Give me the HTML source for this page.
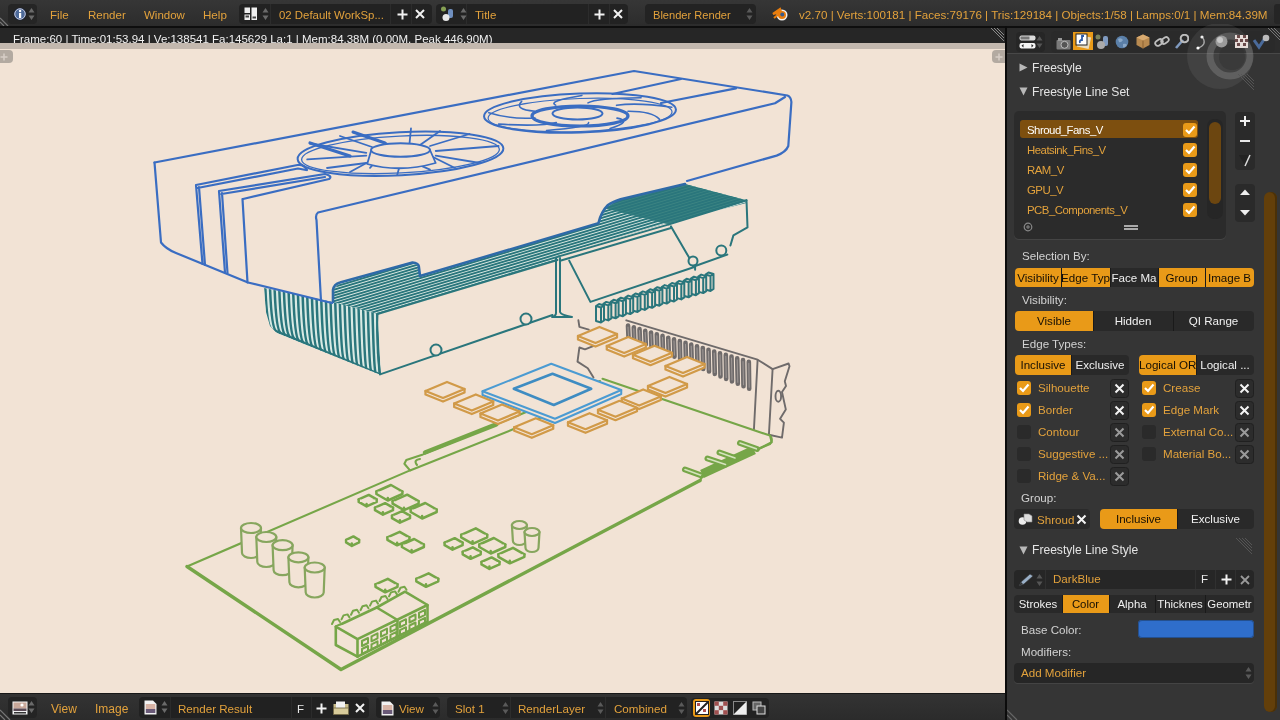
<!DOCTYPE html>
<html><head><meta charset="utf-8">
<style>
*{box-sizing:border-box;margin:0;padding:0}
html,body{width:1280px;height:720px;overflow:hidden;background:#383838;font-family:"Liberation Sans",sans-serif;font-size:11.5px}
.a{position:absolute}
.t{position:absolute;white-space:pre;line-height:14px;will-change:transform}
</style></head><body>
<div class="a" style="left:0px;top:0px;width:1280px;height:26px;background:linear-gradient(#363636,#2c2c2c);"></div>
<div class="a" style="left:0px;top:26px;width:1280px;height:2px;background:#0e0e0e;"></div>
<div class="a" style="left:0px;top:28px;width:1005px;height:15px;background:#262626;"></div>
<div class="a" style="left:0px;top:49px;width:1005px;height:645px;background:#f2e3d5;"></div>
<svg width="1005" height="645" viewBox="0 49 1005 645" style="position:absolute;left:0;top:49px" fill="none" stroke-linecap="round" stroke-linejoin="round">
<defs>
<clipPath id="cf"><polygon points="333,302 333,290 340,282.5 412.5,262.5 418.75,266 420,276 598.4,223.3 604.5,208.2 620.6,199.2 685,184 746.5,200.2 746.5,203 669,222.4 560,254.6 557.5,260 377.5,314"/></clipPath>
<clipPath id="cl"><polygon points="264,288 333,302 333,295 377.5,313.75 381,375 277,333 270,326 266,312"/></clipPath>
</defs>
<polygon points="264,288 333,302 333,295 377.5,313.75 381,375 277,333 270,326 266,312" fill="#d9eae4" stroke="none"/>
<g clip-path="url(#cl)" fill="none">
<path d="M265.4,274.0 L265.4,289.0 Q266.9,326.3 271.7,329.3 L275.7,331.1" stroke="#2a767c" stroke-width="2.5"/>
<path d="M270.1,275.0 L270.1,290.0 Q271.6,328.2 276.2,331.2 L280.2,333.0" stroke="#2a767c" stroke-width="2.5"/>
<path d="M274.7,276.0 L274.7,291.0 Q276.2,330.1 280.7,333.1 L284.7,334.9" stroke="#2a767c" stroke-width="2.5"/>
<path d="M279.4,276.9 L279.4,291.9 Q280.9,331.9 285.2,334.9 L289.2,336.7" stroke="#2a767c" stroke-width="2.5"/>
<path d="M284.0,277.9 L284.0,292.9 Q285.5,333.8 289.8,336.8 L293.8,338.6" stroke="#2a767c" stroke-width="2.5"/>
<path d="M288.7,278.9 L288.7,293.9 Q290.2,335.7 294.3,338.7 L298.3,340.5" stroke="#2a767c" stroke-width="2.5"/>
<path d="M293.3,279.9 L293.3,294.9 Q294.8,337.6 298.8,340.6 L302.8,342.4" stroke="#2a767c" stroke-width="2.5"/>
<path d="M298.0,280.9 L298.0,295.9 Q299.5,339.5 303.3,342.5 L307.3,344.3" stroke="#2a767c" stroke-width="2.5"/>
<path d="M302.7,281.9 L302.7,296.9 Q304.2,341.3 307.8,344.3 L311.8,346.1" stroke="#2a767c" stroke-width="2.5"/>
<path d="M307.3,282.9 L307.3,297.9 Q308.8,343.2 312.3,346.2 L316.3,348.0" stroke="#2a767c" stroke-width="2.5"/>
<path d="M312.0,283.8 L312.0,298.8 Q313.5,345.1 316.8,348.1 L320.8,349.9" stroke="#2a767c" stroke-width="2.5"/>
<path d="M316.6,284.8 L316.6,299.8 Q318.1,347.0 321.3,350.0 L325.3,351.8" stroke="#2a767c" stroke-width="2.5"/>
<path d="M321.3,285.8 L321.3,300.8 Q322.8,348.9 325.9,351.9 L329.9,353.7" stroke="#2a767c" stroke-width="2.5"/>
<path d="M326.0,286.8 L326.0,301.8 Q327.5,350.7 330.4,353.7 L334.4,355.5" stroke="#2a767c" stroke-width="2.5"/>
<path d="M330.6,287.8 L330.6,302.8 Q332.1,352.6 334.9,355.6 L338.9,357.4" stroke="#2a767c" stroke-width="2.5"/>
<path d="M335.3,288.8 L335.3,303.8 Q336.8,354.5 339.4,357.5 L343.4,359.3" stroke="#2a767c" stroke-width="2.5"/>
<path d="M339.9,289.7 L339.9,304.7 Q341.4,356.4 343.9,359.4 L347.9,361.2" stroke="#2a767c" stroke-width="2.5"/>
<path d="M344.6,290.7 L344.6,305.7 Q346.1,358.2 348.4,361.2 L352.4,363.0" stroke="#2a767c" stroke-width="2.5"/>
<path d="M349.2,291.7 L349.2,306.7 Q350.8,360.1 352.9,363.1 L356.9,364.9" stroke="#2a767c" stroke-width="2.5"/>
<path d="M353.9,292.7 L353.9,307.7 Q355.4,362.0 357.4,365.0 L361.4,366.8" stroke="#2a767c" stroke-width="2.5"/>
<path d="M358.6,293.7 L358.6,308.7 Q360.1,363.9 361.9,366.9 L365.9,368.7" stroke="#2a767c" stroke-width="2.5"/>
<path d="M363.2,294.7 L363.2,309.7 Q364.7,365.8 366.5,368.8 L370.5,370.6" stroke="#2a767c" stroke-width="2.5"/>
<path d="M367.9,295.6 L367.9,310.6 Q369.4,367.6 371.0,370.6 L375.0,372.4" stroke="#2a767c" stroke-width="2.5"/>
<path d="M372.5,296.6 L372.5,311.6 Q374.0,369.5 375.5,372.5 L379.5,374.3" stroke="#2a767c" stroke-width="2.5"/>
<path d="M377.2,297.6 L377.2,312.6 Q378.7,371.4 380.0,374.4 L384.0,376.2" stroke="#2a767c" stroke-width="2.5"/>
</g>
<polygon points="333,302 333,290 340,282.5 412.5,262.5 418.75,266 420,276 598.4,223.3 604.5,208.2 620.6,199.2 685,184 746.5,200.2 746.5,203 669,222.4 560,254.6 557.5,260 377.5,314" fill="#e2ede6" stroke="none"/>
<polygon points="604.5,208.2 620.6,199.2 685,184 746.5,200.2 669,224.4 608.5,209.2" fill="#3d8583" stroke="none"/>
<g clip-path="url(#cf)" stroke="#2a767c" stroke-width="1.9">
<line x1="320" y1="331.0" x2="760" y2="199.0"/>
<line x1="320" y1="328.1" x2="760" y2="196.1"/>
<line x1="320" y1="325.3" x2="760" y2="193.3"/>
<line x1="320" y1="322.4" x2="760" y2="190.4"/>
<line x1="320" y1="319.6" x2="760" y2="187.6"/>
<line x1="320" y1="316.8" x2="760" y2="184.8"/>
<line x1="320" y1="313.9" x2="760" y2="181.9"/>
<line x1="320" y1="311.1" x2="760" y2="179.1"/>
<line x1="320" y1="308.2" x2="760" y2="176.2"/>
<line x1="320" y1="305.4" x2="760" y2="173.4"/>
<line x1="320" y1="302.5" x2="760" y2="170.5"/>
<line x1="320" y1="299.6" x2="760" y2="167.6"/>
<line x1="320" y1="296.8" x2="760" y2="164.8"/>
<line x1="320" y1="293.9" x2="760" y2="161.9"/>
<line x1="320" y1="291.1" x2="760" y2="159.1"/>
<line x1="320" y1="288.2" x2="760" y2="156.2"/>
<line x1="320" y1="285.4" x2="760" y2="153.4"/>
<line x1="320" y1="282.6" x2="760" y2="150.6"/>
<line x1="320" y1="279.7" x2="760" y2="147.7"/>
<line x1="320" y1="276.9" x2="760" y2="144.9"/>
<line x1="320" y1="274.0" x2="760" y2="142.0"/>
<line x1="320" y1="271.1" x2="760" y2="139.2"/>
<line x1="320" y1="268.3" x2="760" y2="136.3"/>
<line x1="320" y1="265.4" x2="760" y2="133.4"/>
<line x1="320" y1="262.6" x2="760" y2="130.6"/>
<line x1="320" y1="259.8" x2="760" y2="127.8"/>
<line x1="320" y1="256.9" x2="760" y2="124.9"/>
<line x1="320" y1="254.1" x2="760" y2="122.1"/>
<line x1="320" y1="251.2" x2="760" y2="119.2"/>
<line x1="320" y1="248.3" x2="760" y2="116.3"/>
<line x1="320" y1="245.5" x2="760" y2="113.5"/>
<line x1="320" y1="242.6" x2="760" y2="110.6"/>
<line x1="320" y1="239.8" x2="760" y2="107.8"/>
<line x1="320" y1="236.9" x2="760" y2="104.9"/>
<line x1="320" y1="234.1" x2="760" y2="102.1"/>
<line x1="320" y1="231.2" x2="760" y2="99.2"/>
<line x1="320" y1="228.4" x2="760" y2="96.4"/>
<line x1="320" y1="225.6" x2="760" y2="93.6"/>
<line x1="320" y1="222.7" x2="760" y2="90.7"/>
<line x1="320" y1="219.8" x2="760" y2="87.8"/>
</g>
<path d="M333,302 L333,290 Q334,284 340,282.5 L412.5,262.5 Q418,263 418.75,266 L420,276 L598.4,223.3 Q601,212 608,205 Q612,202 620.6,199.2 L685,184" stroke="#2f6aa8" stroke-width="2.6"/>
<g stroke="#2a767c" stroke-width="2">
<path d="M377.5,313.75 Q376,345 380,374.4 L552.5,315"/>
<path d="M377.5,314 L557.5,260"/>
<g fill="#f2e3d5"><circle cx="436" cy="350" r="5.5"/><circle cx="526" cy="319" r="5.5"/>
<circle cx="693" cy="261" r="4.5"/><circle cx="721.3" cy="250.5" r="5"/></g>
<path d="M556,258 L556,313 Q556,316 552,317 L572,317 Q561,315 560,312 L560,258"/>
<path d="M558,256.6 L669,224.4 M561,260.5 L671,228"/>
<path d="M569.2,260.6 L590.4,301.9 L695.1,266.7"/>
<path d="M671,226.4 L689.1,257.6 M695.1,265.5 L695.1,269.7"/>
<path d="M746.5,200.2 L747.5,227.4 L733.4,235.4 L730.4,245.5 M727.3,254.6 L693.1,266.7"/>
<path d="M669,224.4 L746.5,200.2"/>
</g>
<g stroke="#2a767c" stroke-width="2" fill="#f2e3d5">
<path d="M705.5,274.5 L708.5,272.5 L713.5,274.0 L713.5,289.0 L710.5,291.0 L705.5,289.5 Z M705.5,274.5 L710.5,276.0 L713.5,274.0 M710.5,276.0 L710.5,291.0"/>
<path d="M698.2,276.6 L701.2,274.6 L706.2,276.1 L706.2,291.1 L703.2,293.1 L698.2,291.6 Z M698.2,276.6 L703.2,278.1 L706.2,276.1 M703.2,278.1 L703.2,293.1"/>
<path d="M690.9,278.7 L693.9,276.7 L698.9,278.2 L698.9,293.2 L695.9,295.2 L690.9,293.7 Z M690.9,278.7 L695.9,280.2 L698.9,278.2 M695.9,280.2 L695.9,295.2"/>
<path d="M683.6,280.8 L686.6,278.8 L691.6,280.3 L691.6,295.3 L688.6,297.3 L683.6,295.8 Z M683.6,280.8 L688.6,282.3 L691.6,280.3 M688.6,282.3 L688.6,297.3"/>
<path d="M676.3,282.9 L679.3,280.9 L684.3,282.4 L684.3,297.4 L681.3,299.4 L676.3,297.9 Z M676.3,282.9 L681.3,284.4 L684.3,282.4 M681.3,284.4 L681.3,299.4"/>
<path d="M669.0,285.0 L672.0,283.0 L677.0,284.5 L677.0,299.5 L674.0,301.5 L669.0,300.0 Z M669.0,285.0 L674.0,286.5 L677.0,284.5 M674.0,286.5 L674.0,301.5"/>
<path d="M661.7,287.1 L664.7,285.1 L669.7,286.6 L669.7,301.6 L666.7,303.6 L661.7,302.1 Z M661.7,287.1 L666.7,288.6 L669.7,286.6 M666.7,288.6 L666.7,303.6"/>
<path d="M654.4,289.2 L657.4,287.2 L662.4,288.7 L662.4,303.7 L659.4,305.7 L654.4,304.2 Z M654.4,289.2 L659.4,290.7 L662.4,288.7 M659.4,290.7 L659.4,305.7"/>
<path d="M647.1,291.3 L650.1,289.3 L655.1,290.8 L655.1,305.8 L652.1,307.8 L647.1,306.3 Z M647.1,291.3 L652.1,292.8 L655.1,290.8 M652.1,292.8 L652.1,307.8"/>
<path d="M639.8,293.4 L642.8,291.4 L647.8,292.9 L647.8,307.9 L644.8,309.9 L639.8,308.4 Z M639.8,293.4 L644.8,294.9 L647.8,292.9 M644.8,294.9 L644.8,309.9"/>
<path d="M632.5,295.5 L635.5,293.5 L640.5,295.0 L640.5,310.0 L637.5,312.0 L632.5,310.5 Z M632.5,295.5 L637.5,297.0 L640.5,295.0 M637.5,297.0 L637.5,312.0"/>
<path d="M625.2,297.6 L628.2,295.6 L633.2,297.1 L633.2,312.1 L630.2,314.1 L625.2,312.6 Z M625.2,297.6 L630.2,299.1 L633.2,297.1 M630.2,299.1 L630.2,314.1"/>
<path d="M617.9,299.7 L620.9,297.7 L625.9,299.2 L625.9,314.2 L622.9,316.2 L617.9,314.7 Z M617.9,299.7 L622.9,301.2 L625.9,299.2 M622.9,301.2 L622.9,316.2"/>
<path d="M610.6,301.8 L613.6,299.8 L618.6,301.3 L618.6,316.3 L615.6,318.3 L610.6,316.8 Z M610.6,301.8 L615.6,303.3 L618.6,301.3 M615.6,303.3 L615.6,318.3"/>
<path d="M603.3,303.9 L606.3,301.9 L611.3,303.4 L611.3,318.4 L608.3,320.4 L603.3,318.9 Z M603.3,303.9 L608.3,305.4 L611.3,303.4 M608.3,305.4 L608.3,320.4"/>
<path d="M596.0,306.0 L599.0,304.0 L604.0,305.5 L604.0,320.5 L601.0,322.5 L596.0,321.0 Z M596.0,306.0 L601.0,307.5 L604.0,305.5 M601.0,307.5 L601.0,322.5"/>
</g>
<g stroke="#3a6dc2" stroke-width="2.2">
<path d="M154.5,162.5 L634,71 L787.5,95.5 Q791,97 791.4,102 L788.3,146 Q786,152 776.6,155.6 L687,181"/>
<path d="M154.5,162.5 L161,242.5 Q166,249 176,253 L248,282.5 L332,303"/>
<path d="M785,97 L775,103.3 L318,212.5 Q315,215 316.5,220 L321,301"/>
<path d="M196,185 L297.5,165 Q304,164 307,170 M197.5,188 L298,168.5 L306,170 M196,185 L202.5,264 M199,187 L205,265"/>
<path d="M219,191 L325,174 Q333,176 329,179 L243,199 M221.5,194 L325,177 M219,191 L225,272.5 M222,193 L227.5,273"/>
<path d="M242.5,199 L247.5,282.5"/>
<path d="M612.5,94 L681,79 M661,103 L736,88.4"/>
</g>
<g stroke="#3a6dc2" stroke-width="2">
<ellipse cx="400.5" cy="153.7" rx="103" ry="21.5" transform="rotate(-3 400.5 153.7)"/>
<ellipse cx="400.5" cy="154.5" rx="99" ry="18.5" transform="rotate(-3 400.5 154.5)" stroke-width="1.3"/>
<line x1="310" y1="143.5" x2="366.3" y2="152.8" stroke-width="1.8"/>
<line x1="353" y1="132.2" x2="387" y2="143.5" stroke-width="1.8"/>
<line x1="411" y1="128.4" x2="409.5" y2="143.5" stroke-width="1.8"/>
<line x1="469.5" y1="134" x2="430" y2="146" stroke-width="1.8"/>
<line x1="498.6" y1="146" x2="435.7" y2="151" stroke-width="1.8"/>
<line x1="479.8" y1="163" x2="435.7" y2="155.6" stroke-width="1.8"/>
<line x1="430" y1="169.7" x2="402" y2="157.5" stroke-width="1.8"/>
<line x1="397.3" y1="174.4" x2="402" y2="157.5" stroke-width="1.8"/>
<line x1="370" y1="167.8" x2="379.4" y2="157.5" stroke-width="1.8"/>
<line x1="307.2" y1="159.4" x2="366.3" y2="155.6" stroke-width="1.8"/>
<line x1="327" y1="168" x2="366.3" y2="163" stroke-width="1.8"/>
<line x1="440" y1="131" x2="420" y2="145" stroke-width="1.8"/>
<line x1="340" y1="136" x2="372" y2="147" stroke-width="1.8"/>
<line x1="455" y1="168" x2="433" y2="157" stroke-width="1.8"/>
<line x1="350" y1="172" x2="372" y2="160" stroke-width="1.8"/>
<path d="M310,143 L350,156" stroke-width="3.2"/><path d="M353,132 L385,143" stroke-width="3"/>
</g>
<path d="M371,151 L367.2,164 Q400,173 435.7,163 L430,150" stroke="#3a6dc2" stroke-width="1.8" fill="#f2e3d5"/>
<ellipse cx="400.5" cy="150" rx="29.5" ry="6.8" stroke="#3a6dc2" stroke-width="2" fill="#f2e3d5"/>
<g transform="translate(580,113) rotate(-2)" stroke="#3a6dc2" stroke-width="2">
<ellipse cx="0" cy="0" rx="96" ry="19.5"/>
<ellipse cx="0" cy="2.0" rx="92" ry="16.5" stroke-width="1.2"/>
<path d="M48.0,0.0 Q71.9,0.7 79.3,9.1" stroke-width="1.6"/>
<path d="M36.8,6.4 Q52.8,9.9 29.5,16.6" stroke-width="1.6"/>
<path d="M8.3,9.8 Q8.9,14.5 -34.1,16.3" stroke-width="1.6"/>
<path d="M-24.0,8.7 Q-39.1,12.3 -81.7,8.3" stroke-width="1.6"/>
<path d="M-45.1,3.4 Q-68.8,4.3 -91.1,-3.5" stroke-width="1.6"/>
<path d="M-45.1,-3.4 Q-66.3,-5.7 -57.9,-13.7" stroke-width="1.6"/>
<path d="M-24.0,-8.7 Q-32.8,-13.0 2.5,-17.5" stroke-width="1.6"/>
<path d="M8.3,-9.8 Q16.0,-14.3 61.6,-13.1" stroke-width="1.6"/>
<path d="M36.8,-6.4 Q57.4,-8.8 92.0,-2.6" stroke-width="1.6"/>
</g>
<ellipse cx="580" cy="116" rx="48" ry="10" stroke="#3a6dc2" stroke-width="3.2"/>
<ellipse cx="577.5" cy="113.5" rx="25" ry="6" stroke="#3a6dc2" stroke-width="2" fill="#f2e3d5"/>
<g stroke="#6f6b6b" stroke-width="1.9">
<path d="M626.3,320.3 L757.6,359.7 L772.6,369.1 L788.6,363.5 L789.5,366.3 L784.8,381.3 L786,386 L782,392 L785.8,409.4 L780.1,418.8 L783.9,422.6 L782,437.6 L768.9,434.8"/>
<path d="M757.6,360 L753.9,430 M772.6,369 L768.9,434.8"/>
<ellipse cx="778.3" cy="396.3" rx="2.8" ry="5.5"/>
<path d="M578.4,320.3 L579.4,326.9 L588.8,329.7 M594.4,345.6 L585,349.4 L579.4,347.5 L577.5,361.6 L587.8,368.2 L593.5,377.5"/>
</g>
<g stroke="#6f6b6b" stroke-width="4.6">
<line x1="628.0" y1="325.6" x2="628.5" y2="336.9"/>
<line x1="633.8" y1="327.3" x2="634.2" y2="339.3"/>
<line x1="639.5" y1="329.1" x2="640.0" y2="341.8"/>
<line x1="645.2" y1="330.8" x2="645.8" y2="344.3"/>
<line x1="651.0" y1="332.5" x2="651.5" y2="346.8"/>
<line x1="656.8" y1="334.2" x2="657.2" y2="349.2"/>
<line x1="662.5" y1="335.9" x2="663.0" y2="351.7"/>
<line x1="668.2" y1="337.7" x2="668.8" y2="354.2"/>
<line x1="674.0" y1="339.4" x2="674.5" y2="356.6"/>
<line x1="679.8" y1="341.1" x2="680.2" y2="359.1"/>
<line x1="685.5" y1="342.9" x2="686.0" y2="361.6"/>
<line x1="691.2" y1="344.6" x2="691.8" y2="364.1"/>
<line x1="697.0" y1="346.3" x2="697.5" y2="366.5"/>
<line x1="702.8" y1="348.0" x2="703.2" y2="369.0"/>
<line x1="708.5" y1="349.8" x2="709.0" y2="371.5"/>
<line x1="714.2" y1="351.5" x2="714.8" y2="373.9"/>
<line x1="720.0" y1="353.2" x2="720.5" y2="376.4"/>
<line x1="725.8" y1="354.9" x2="726.2" y2="378.9"/>
<line x1="731.5" y1="356.6" x2="732.0" y2="381.4"/>
<line x1="737.2" y1="358.4" x2="737.8" y2="383.8"/>
<line x1="743.0" y1="360.1" x2="743.5" y2="386.3"/>
<line x1="748.8" y1="361.8" x2="749.2" y2="388.8"/>
</g>
<g stroke="#9d9694" stroke-width="1.1">
<line x1="628.0" y1="327.1" x2="628.5" y2="335.4"/>
<line x1="633.8" y1="328.8" x2="634.2" y2="337.8"/>
<line x1="639.5" y1="330.6" x2="640.0" y2="340.3"/>
<line x1="645.2" y1="332.3" x2="645.8" y2="342.8"/>
<line x1="651.0" y1="334.0" x2="651.5" y2="345.2"/>
<line x1="656.8" y1="335.7" x2="657.2" y2="347.7"/>
<line x1="662.5" y1="337.4" x2="663.0" y2="350.2"/>
<line x1="668.2" y1="339.2" x2="668.8" y2="352.7"/>
<line x1="674.0" y1="340.9" x2="674.5" y2="355.1"/>
<line x1="679.8" y1="342.6" x2="680.2" y2="357.6"/>
<line x1="685.5" y1="344.4" x2="686.0" y2="360.1"/>
<line x1="691.2" y1="346.1" x2="691.8" y2="362.6"/>
<line x1="697.0" y1="347.8" x2="697.5" y2="365.0"/>
<line x1="702.8" y1="349.5" x2="703.2" y2="367.5"/>
<line x1="708.5" y1="351.2" x2="709.0" y2="370.0"/>
<line x1="714.2" y1="353.0" x2="714.8" y2="372.4"/>
<line x1="720.0" y1="354.7" x2="720.5" y2="374.9"/>
<line x1="725.8" y1="356.4" x2="726.2" y2="377.4"/>
<line x1="731.5" y1="358.1" x2="732.0" y2="379.9"/>
<line x1="737.2" y1="359.9" x2="737.8" y2="382.3"/>
<line x1="743.0" y1="361.6" x2="743.5" y2="384.8"/>
<line x1="748.8" y1="363.3" x2="749.2" y2="387.3"/>
</g>
<g stroke="#76a648" stroke-width="2.1">
<path d="M187,566.5 L410,470.4 L404.4,463.8 L406.3,460 L423,454.4 L528,411.3 L600,381"/>
<path d="M410,470.4 L511.3,430 L580,401"/>
<path d="M417,465 Q413,460 420,459"/>
<path d="M602.5,378.75 L770,435.6 L771.7,442.2 L760,448.3"/>
<path d="M187,566.5 L341,669.5 L700,480.5" stroke-width="3.4"/>
</g>
<path d="M425,452.5 L496.3,424.4" stroke="#76a648" stroke-width="4.5"/>
<path d="M754,450 L702,474" stroke="#76a648" stroke-width="9" stroke-linecap="butt"/>
<line x1="740" y1="443" x2="757" y2="449" stroke="#76a648" stroke-width="6"/>
<line x1="740" y1="443" x2="757" y2="449" stroke="#d5e3bd" stroke-width="1.6"/>
<line x1="719.5" y1="452.5" x2="735" y2="458" stroke="#76a648" stroke-width="6"/>
<line x1="719.5" y1="452.5" x2="735" y2="458" stroke="#d5e3bd" stroke-width="1.6"/>
<line x1="707.5" y1="458.5" x2="725.5" y2="464.5" stroke="#76a648" stroke-width="6"/>
<line x1="707.5" y1="458.5" x2="725.5" y2="464.5" stroke="#d5e3bd" stroke-width="1.6"/>
<line x1="685" y1="469.5" x2="701.5" y2="475.5" stroke="#76a648" stroke-width="6"/>
<line x1="685" y1="469.5" x2="701.5" y2="475.5" stroke="#d5e3bd" stroke-width="1.6"/>
<path d="M771,436.9 Q773,441 770,444 L758,449 M702,476 L700,481" stroke="#76a648" stroke-width="2.2"/>
<path d="M241,528 L242,553 A9,5 0 0 0 260,553 L261,528" stroke="#87a65e" stroke-width="2.2" fill="#f2e3d5"/>
<ellipse cx="251" cy="528" rx="10" ry="5" stroke="#87a65e" stroke-width="2.2" fill="#f2e3d5"/>
<path d="M256.3,537 L257.3,562 A9,5 0 0 0 275.3,562 L276.3,537" stroke="#87a65e" stroke-width="2.2" fill="#f2e3d5"/>
<ellipse cx="266.3" cy="537" rx="10" ry="5" stroke="#87a65e" stroke-width="2.2" fill="#f2e3d5"/>
<path d="M272.6,545.2 L273.6,570.2 A9,5 0 0 0 291.6,570.2 L292.6,545.2" stroke="#87a65e" stroke-width="2.2" fill="#f2e3d5"/>
<ellipse cx="282.6" cy="545.2" rx="10" ry="5" stroke="#87a65e" stroke-width="2.2" fill="#f2e3d5"/>
<path d="M288.4,557.3 L289.4,582.3 A9,5 0 0 0 307.4,582.3 L308.4,557.3" stroke="#87a65e" stroke-width="2.2" fill="#f2e3d5"/>
<ellipse cx="298.4" cy="557.3" rx="10" ry="5" stroke="#87a65e" stroke-width="2.2" fill="#f2e3d5"/>
<path d="M304.7,567.5 L305.7,592.5 A9,5 0 0 0 323.7,592.5 L324.7,567.5" stroke="#87a65e" stroke-width="2.2" fill="#f2e3d5"/>
<ellipse cx="314.7" cy="567.5" rx="10" ry="5" stroke="#87a65e" stroke-width="2.2" fill="#f2e3d5"/>
<path d="M511.9,525 L512.9,541 A6.5,4 0 0 0 525.9,541 L526.9,525" stroke="#87a65e" stroke-width="2.2" fill="#f2e3d5"/>
<ellipse cx="519.4" cy="525" rx="7.5" ry="4" stroke="#87a65e" stroke-width="2.2" fill="#f2e3d5"/>
<path d="M524.5,532 L525.5,548 A6.5,4 0 0 0 538.5,548 L539.5,532" stroke="#87a65e" stroke-width="2.2" fill="#f2e3d5"/>
<ellipse cx="532" cy="532" rx="7.5" ry="4" stroke="#87a65e" stroke-width="2.2" fill="#f2e3d5"/>
<polygon points="358.7,499.4 368.8,494.9 376.7,499.4 366.6,503.9" stroke="#76a648" stroke-width="2.5" fill="#f2e3d5"/>
<path d="M358.7,499.4 L358.7,501.9 L366.6,506.4 L376.7,501.9 L376.7,499.4 M366.6,503.9 L366.6,506.4" stroke="#76a648" stroke-width="2.5" fill="#f2e3d5"/>
<polygon points="376.4,491.5 391.0,485.0 402.4,491.5 387.8,498.0" stroke="#76a648" stroke-width="2.5" fill="#f2e3d5"/>
<path d="M376.4,491.5 L376.4,494.0 L387.8,500.5 L402.4,494.0 L402.4,491.5 M387.8,498.0 L387.8,500.5" stroke="#76a648" stroke-width="2.5" fill="#f2e3d5"/>
<polygon points="375.0,507.7 385.1,503.2 393.0,507.7 382.9,512.2" stroke="#76a648" stroke-width="2.5" fill="#f2e3d5"/>
<path d="M375.0,507.7 L375.0,510.2 L382.9,514.7 L393.0,510.2 L393.0,507.7 M382.9,512.2 L382.9,514.7" stroke="#76a648" stroke-width="2.5" fill="#f2e3d5"/>
<polygon points="392.6,501.2 407.2,494.7 418.6,501.2 404.0,507.7" stroke="#76a648" stroke-width="2.5" fill="#f2e3d5"/>
<path d="M392.6,501.2 L392.6,503.7 L404.0,510.2 L418.6,503.7 L418.6,501.2 M404.0,507.7 L404.0,510.2" stroke="#76a648" stroke-width="2.5" fill="#f2e3d5"/>
<polygon points="392.0,515.7 402.1,511.2 410.0,515.7 399.9,520.2" stroke="#76a648" stroke-width="2.5" fill="#f2e3d5"/>
<path d="M392.0,515.7 L392.0,518.2 L399.9,522.7 L410.0,518.2 L410.0,515.7 M399.9,520.2 L399.9,522.7" stroke="#76a648" stroke-width="2.5" fill="#f2e3d5"/>
<polygon points="410.7,509.5 425.3,503.0 436.7,509.5 422.1,516.0" stroke="#76a648" stroke-width="2.5" fill="#f2e3d5"/>
<path d="M410.7,509.5 L410.7,512.0 L422.1,518.5 L436.7,512.0 L436.7,509.5 M422.1,516.0 L422.1,518.5" stroke="#76a648" stroke-width="2.5" fill="#f2e3d5"/>
<polygon points="346.1,539.9 353.4,536.4 359.1,539.9 351.8,543.4" stroke="#76a648" stroke-width="2.5" fill="#f2e3d5"/>
<path d="M346.1,539.9 L346.1,542.4 L351.8,545.9 L359.1,542.4 L359.1,539.9 M351.8,543.4 L351.8,545.9" stroke="#76a648" stroke-width="2.5" fill="#f2e3d5"/>
<polygon points="387.4,537.3 399.7,531.8 409.4,537.3 397.1,542.8" stroke="#76a648" stroke-width="2.5" fill="#f2e3d5"/>
<path d="M387.4,537.3 L387.4,539.8 L397.1,545.3 L409.4,539.8 L409.4,537.3 M397.1,542.8 L397.1,545.3" stroke="#76a648" stroke-width="2.5" fill="#f2e3d5"/>
<polygon points="401.9,544.5 414.2,539.0 423.9,544.5 411.6,550.0" stroke="#76a648" stroke-width="2.5" fill="#f2e3d5"/>
<path d="M401.9,544.5 L401.9,547.0 L411.6,552.5 L423.9,547.0 L423.9,544.5 M411.6,550.0 L411.6,552.5" stroke="#76a648" stroke-width="2.5" fill="#f2e3d5"/>
<polygon points="444.6,542.7 454.7,538.2 462.6,542.7 452.5,547.2" stroke="#76a648" stroke-width="2.5" fill="#f2e3d5"/>
<path d="M444.6,542.7 L444.6,545.2 L452.5,549.7 L462.6,545.2 L462.6,542.7 M452.5,547.2 L452.5,549.7" stroke="#76a648" stroke-width="2.5" fill="#f2e3d5"/>
<polygon points="461.2,534.8 475.8,528.3 487.2,534.8 472.6,541.3" stroke="#76a648" stroke-width="2.5" fill="#f2e3d5"/>
<path d="M461.2,534.8 L461.2,537.3 L472.6,543.8 L487.2,537.3 L487.2,534.8 M472.6,541.3 L472.6,543.8" stroke="#76a648" stroke-width="2.5" fill="#f2e3d5"/>
<polygon points="462.7,551.8 472.8,547.3 480.7,551.8 470.6,556.3" stroke="#76a648" stroke-width="2.5" fill="#f2e3d5"/>
<path d="M462.7,551.8 L462.7,554.3 L470.6,558.8 L480.7,554.3 L480.7,551.8 M470.6,556.3 L470.6,558.8" stroke="#76a648" stroke-width="2.5" fill="#f2e3d5"/>
<polygon points="479.3,544.5 493.9,538.0 505.3,544.5 490.7,551.0" stroke="#76a648" stroke-width="2.5" fill="#f2e3d5"/>
<path d="M479.3,544.5 L479.3,547.0 L490.7,553.5 L505.3,547.0 L505.3,544.5 M490.7,551.0 L490.7,553.5" stroke="#76a648" stroke-width="2.5" fill="#f2e3d5"/>
<polygon points="481.5,561.9 491.6,557.4 499.5,561.9 489.4,566.4" stroke="#76a648" stroke-width="2.5" fill="#f2e3d5"/>
<path d="M481.5,561.9 L481.5,564.4 L489.4,568.9 L499.5,564.4 L499.5,561.9 M489.4,566.4 L489.4,568.9" stroke="#76a648" stroke-width="2.5" fill="#f2e3d5"/>
<polygon points="498.4,554.3 513.0,547.8 524.4,554.3 509.8,560.8" stroke="#76a648" stroke-width="2.5" fill="#f2e3d5"/>
<path d="M498.4,554.3 L498.4,556.8 L509.8,563.3 L524.4,556.8 L524.4,554.3 M509.8,560.8 L509.8,563.3" stroke="#76a648" stroke-width="2.5" fill="#f2e3d5"/>
<polygon points="375.5,584.3 387.8,578.8 397.5,584.3 385.2,589.8" stroke="#76a648" stroke-width="2.5" fill="#f2e3d5"/>
<path d="M375.5,584.3 L375.5,586.8 L385.2,592.3 L397.5,586.8 L397.5,584.3 M385.2,589.8 L385.2,592.3" stroke="#76a648" stroke-width="2.5" fill="#f2e3d5"/>
<polygon points="416.3,578.8 428.6,573.3 438.3,578.8 426.0,584.3" stroke="#76a648" stroke-width="2.5" fill="#f2e3d5"/>
<path d="M416.3,578.8 L416.3,581.3 L426.0,586.8 L438.3,581.3 L438.3,578.8 M426.0,584.3 L426.0,586.8" stroke="#76a648" stroke-width="2.5" fill="#f2e3d5"/>
<g stroke="#76a648" stroke-width="2.6" fill="#f2e3d5">
<path d="M335.8,626.7 L376.7,607.5 L405,591.7 L427.5,605 L427.5,621.7 L357.5,656.7 L335.8,645 Z"/>
<path d="M335.8,626.7 L357.5,639.2 L427.5,605 M357.5,639.2 L357.5,656.7 M376.7,607.5 L397.5,620 L397.5,638"/>
</g>
<g stroke="#76a648" stroke-width="2">
<path d="M362.0,641.0 l6,-3 l0,5 l-6,3 z"/>
<path d="M371.5,636.3 l6,-3 l0,5 l-6,3 z"/>
<path d="M381.0,631.6 l6,-3 l0,5 l-6,3 z"/>
<path d="M390.5,626.9 l6,-3 l0,5 l-6,3 z"/>
<path d="M400.0,622.2 l6,-3 l0,5 l-6,3 z"/>
<path d="M409.5,617.5 l6,-3 l0,5 l-6,3 z"/>
<path d="M419.0,612.8 l6,-3 l0,5 l-6,3 z"/>
<path d="M362.0,649.0 l6,-3 l0,5 l-6,3 z"/>
<path d="M371.5,644.3 l6,-3 l0,5 l-6,3 z"/>
<path d="M381.0,639.6 l6,-3 l0,5 l-6,3 z"/>
<path d="M390.5,634.9 l6,-3 l0,5 l-6,3 z"/>
<path d="M400.0,630.2 l6,-3 l0,5 l-6,3 z"/>
<path d="M409.5,625.5 l6,-3 l0,5 l-6,3 z"/>
<path d="M419.0,620.8 l6,-3 l0,5 l-6,3 z"/>
<path d="M332.0,624.0 l2,-4 l4,-1 l2,3"/>
<path d="M341.5,619.4 l2,-4 l4,-1 l2,3"/>
<path d="M351.0,614.8 l2,-4 l4,-1 l2,3"/>
<path d="M360.5,610.2 l2,-4 l4,-1 l2,3"/>
<path d="M370.0,605.6 l2,-4 l4,-1 l2,3"/>
<path d="M379.5,601.0 l2,-4 l4,-1 l2,3"/>
<path d="M389.0,596.4 l2,-4 l4,-1 l2,3"/>
<path d="M398.5,591.8 l2,-4 l4,-1 l2,3"/>
</g>
<g stroke="#4b9bd2" stroke-width="2" fill="#f2e3d5">
<path d="M482.5,391.25 L482.5,395 L555,423 L621.25,394 L621.25,390" />
<polygon points="482.5,391.25 551.25,363.75 621.25,390 555,418.75"/>
</g>
<polygon points="513.75,388.75 552.5,373.75 591.25,388.75 553.75,405" stroke="#3e8cc2" stroke-width="2.5" fill="none"/>
<path d="M578.0,336.0 L578.0,339.5 L595.5,346.5 L617.0,337.5 L617.0,334.0" stroke="#d19a48" stroke-width="2.3" fill="#f2e3d5"/>
<polygon points="578.0,336.0 599.5,327.0 617.0,334.0 595.5,343.0" stroke="#d19a48" stroke-width="2.3" fill="#f2e3d5"/>
<path d="M606.8,346.0 L606.8,349.5 L624.2,356.5 L645.8,347.5 L645.8,344.0" stroke="#d19a48" stroke-width="2.3" fill="#f2e3d5"/>
<polygon points="606.8,346.0 628.2,337.0 645.8,344.0 624.2,353.0" stroke="#d19a48" stroke-width="2.3" fill="#f2e3d5"/>
<path d="M633.0,354.8 L633.0,358.2 L650.5,365.2 L672.0,356.2 L672.0,352.8" stroke="#d19a48" stroke-width="2.3" fill="#f2e3d5"/>
<polygon points="633.0,354.8 654.5,345.8 672.0,352.8 650.5,361.8" stroke="#d19a48" stroke-width="2.3" fill="#f2e3d5"/>
<path d="M665.5,366.0 L665.5,369.5 L683.0,376.5 L704.5,367.5 L704.5,364.0" stroke="#d19a48" stroke-width="2.3" fill="#f2e3d5"/>
<polygon points="665.5,366.0 687.0,357.0 704.5,364.0 683.0,373.0" stroke="#d19a48" stroke-width="2.3" fill="#f2e3d5"/>
<path d="M648.0,386.0 L648.0,389.5 L665.5,396.5 L687.0,387.5 L687.0,384.0" stroke="#d19a48" stroke-width="2.3" fill="#f2e3d5"/>
<polygon points="648.0,386.0 669.5,377.0 687.0,384.0 665.5,393.0" stroke="#d19a48" stroke-width="2.3" fill="#f2e3d5"/>
<path d="M621.8,398.5 L621.8,402.0 L639.2,409.0 L660.8,400.0 L660.8,396.5" stroke="#d19a48" stroke-width="2.3" fill="#f2e3d5"/>
<polygon points="621.8,398.5 643.2,389.5 660.8,396.5 639.2,405.5" stroke="#d19a48" stroke-width="2.3" fill="#f2e3d5"/>
<path d="M598.0,409.8 L598.0,413.2 L615.5,420.2 L637.0,411.2 L637.0,407.8" stroke="#d19a48" stroke-width="2.3" fill="#f2e3d5"/>
<polygon points="598.0,409.8 619.5,400.8 637.0,407.8 615.5,416.8" stroke="#d19a48" stroke-width="2.3" fill="#f2e3d5"/>
<path d="M568.0,422.2 L568.0,425.8 L585.5,432.8 L607.0,423.8 L607.0,420.2" stroke="#d19a48" stroke-width="2.3" fill="#f2e3d5"/>
<polygon points="568.0,422.2 589.5,413.2 607.0,420.2 585.5,429.2" stroke="#d19a48" stroke-width="2.3" fill="#f2e3d5"/>
<path d="M425.5,391.0 L425.5,394.5 L443.0,401.5 L464.5,392.5 L464.5,389.0" stroke="#d19a48" stroke-width="2.3" fill="#f2e3d5"/>
<polygon points="425.5,391.0 447.0,382.0 464.5,389.0 443.0,398.0" stroke="#d19a48" stroke-width="2.3" fill="#f2e3d5"/>
<path d="M454.2,403.5 L454.2,407.0 L471.8,414.0 L493.2,405.0 L493.2,401.5" stroke="#d19a48" stroke-width="2.3" fill="#f2e3d5"/>
<polygon points="454.2,403.5 475.8,394.5 493.2,401.5 471.8,410.5" stroke="#d19a48" stroke-width="2.3" fill="#f2e3d5"/>
<path d="M480.5,413.5 L480.5,417.0 L498.0,424.0 L519.5,415.0 L519.5,411.5" stroke="#d19a48" stroke-width="2.3" fill="#f2e3d5"/>
<polygon points="480.5,413.5 502.0,404.5 519.5,411.5 498.0,420.5" stroke="#d19a48" stroke-width="2.3" fill="#f2e3d5"/>
<path d="M514.2,427.2 L514.2,430.8 L531.8,437.8 L553.2,428.8 L553.2,425.2" stroke="#d19a48" stroke-width="2.3" fill="#f2e3d5"/>
<polygon points="514.2,427.2 535.8,418.2 553.2,425.2 531.8,434.2" stroke="#d19a48" stroke-width="2.3" fill="#f2e3d5"/>
</svg>
<div class="a" style="left:0px;top:43px;width:1005px;height:6px;background:#c3b8ae;"></div>
<div class="a" style="left:0px;top:693px;width:1005px;height:1px;background:#181818;"></div>
<div class="a" style="left:0px;top:694px;width:1005px;height:26px;background:linear-gradient(#333333,#2b2b2b);"></div>
<div class="a" style="left:1005px;top:26px;width:2px;height:694px;background:#0c0c0c;"></div>
<div class="a" style="left:1007px;top:28px;width:273px;height:25px;background:#2c2c2c;"></div>
<div class="a" style="left:1007px;top:53px;width:273px;height:1px;background:#484848;"></div>
<div class="a" style="left:1007px;top:54px;width:273px;height:666px;background:#353535;"></div>
<svg class="a" style="left:0px;top:14px" width="12" height="12" viewBox="0 0 12 12"><line x1="0" y1="4" x2="8" y2="12" stroke="#777" stroke-width="1.2"/><line x1="0" y1="8" x2="4" y2="12" stroke="#777" stroke-width="1.2"/></svg>
<div class="a" style="left:8px;top:4px;width:29px;height:20px;background:#252525;border-radius:4px;"></div>
<svg class="a" style="left:13px;top:7px" width="14" height="14" viewBox="0 0 14 14"><circle cx="7" cy="7" r="6.3" fill="#0f1f3a"/><circle cx="7" cy="7" r="5.3" fill="#4d6a9a" stroke="#dde" stroke-width="0.9"/><rect x="6" y="6" width="2.2" height="5" fill="#fff"/><circle cx="7.1" cy="4" r="1.2" fill="#fff"/></svg>
<svg class="a" style="left:28px;top:7px" width="7" height="14" viewBox="0 0 7 14"><path d="M3.5,1 L6.5,5.5 L0.5,5.5Z M0.5,8.5 L6.5,8.5 L3.5,13Z" fill="#6a6a6a"/></svg>
<div class="t" style="left:50px;top:7.98px;font-size:11.6px;color:#e3a23c;">File</div>
<div class="t" style="left:88px;top:8.02px;font-size:11.5px;color:#e3a23c;">Render</div>
<div class="t" style="left:144px;top:8.02px;font-size:11.5px;color:#e3a23c;">Window</div>
<div class="t" style="left:203px;top:7.98px;font-size:11.6px;color:#e3a23c;">Help</div>
<div class="a" style="left:239px;top:4px;width:193px;height:20px;background:#222;border-radius:4px;"></div>
<div class="a" style="left:270px;top:4px;width:1px;height:20px;background:#2c2c2c;"></div>
<div class="a" style="left:390px;top:4px;width:1px;height:20px;background:#2c2c2c;"></div>
<div class="a" style="left:411px;top:4px;width:1px;height:20px;background:#2c2c2c;"></div>
<svg class="a" style="left:244px;top:7px" width="14" height="14" viewBox="0 0 14 14"><rect x="0.5" y="0.5" width="5.5" height="5.5" fill="#f0f0f0"/><rect x="0.5" y="7.5" width="5.5" height="5.5" fill="#f0f0f0"/><rect x="7.5" y="0.5" width="5.5" height="12.5" fill="#f0f0f0"/><rect x="1.5" y="8.5" width="3.5" height="2" fill="#444"/><rect x="8.5" y="9.5" width="3.5" height="2" fill="#444"/></svg>
<svg class="a" style="left:262px;top:7px" width="7" height="14" viewBox="0 0 7 14"><path d="M3.5,1 L6.5,5.5 L0.5,5.5Z M0.5,8.5 L6.5,8.5 L3.5,13Z" fill="#6a6a6a"/></svg>
<div class="t" style="left:278.5px;top:8.05px;font-size:11.4px;color:#e3a23c;">02 Default WorkSp...</div>
<svg class="a" style="left:397px;top:9px" width="11" height="11" viewBox="0 0 11 11"><path d="M5.5,0.5V10.5M0.5,5.5H10.5" stroke="#f2f2f2" stroke-width="2"/></svg>
<svg class="a" style="left:415px;top:9px" width="10" height="10" viewBox="0 0 10 10"><path d="M1,1L9,9M9,1L1,9" stroke="#f2f2f2" stroke-width="2"/></svg>
<div class="a" style="left:436px;top:4px;width:192px;height:20px;background:#222;border-radius:4px;"></div>
<div class="a" style="left:466px;top:4px;width:1px;height:20px;background:#2c2c2c;"></div>
<div class="a" style="left:588px;top:4px;width:1px;height:20px;background:#2c2c2c;"></div>
<div class="a" style="left:609px;top:4px;width:1px;height:20px;background:#2c2c2c;"></div>
<svg class="a" style="left:440px;top:6px" width="18" height="16" viewBox="0 0 18 16"><circle cx="3.5" cy="3" r="2.5" fill="#9fbf60" opacity="0.8"/><rect x="8" y="3" width="5" height="9" rx="2" fill="#6f8fbf"/><circle cx="6" cy="11.5" r="3.5" fill="#e8e8e8"/></svg>
<svg class="a" style="left:460px;top:7px" width="7" height="14" viewBox="0 0 7 14"><path d="M3.5,1 L6.5,5.5 L0.5,5.5Z M0.5,8.5 L6.5,8.5 L3.5,13Z" fill="#6a6a6a"/></svg>
<div class="t" style="left:475px;top:8.02px;font-size:11.5px;color:#e3a23c;">Title</div>
<svg class="a" style="left:594px;top:9px" width="11" height="11" viewBox="0 0 11 11"><path d="M5.5,0.5V10.5M0.5,5.5H10.5" stroke="#f2f2f2" stroke-width="2"/></svg>
<svg class="a" style="left:613px;top:9px" width="10" height="10" viewBox="0 0 10 10"><path d="M1,1L9,9M9,1L1,9" stroke="#f2f2f2" stroke-width="2"/></svg>
<div class="a" style="left:645px;top:4px;width:111px;height:20px;background:#232323;border-radius:4px;"></div>
<div class="t" style="left:652.5px;top:8.15px;font-size:11.1px;color:#e3a23c;">Blender Render</div>
<svg class="a" style="left:746px;top:7px" width="7" height="14" viewBox="0 0 7 14"><path d="M3.5,1 L6.5,5.5 L0.5,5.5Z M0.5,8.5 L6.5,8.5 L3.5,13Z" fill="#5a5a5a"/></svg>
<svg class="a" style="left:772px;top:6px" width="18" height="16" viewBox="0 0 18 16"><circle cx="10" cy="9" r="5.5" fill="#f0f0f0"/><path d="M1,8 L8,3 L9,6 Z M2,12 L7,8" stroke="#e87d0d" stroke-width="2.2" fill="#e87d0d"/><circle cx="10" cy="9" r="4" fill="#e87d0d"/><circle cx="10.3" cy="8.6" r="2" fill="#3a5a8a"/></svg>
<div class="t" style="left:799px;top:7.97px;font-size:11.62px;color:#e3a23c;">v2.70 | Verts:100181 | Faces:79176 | Tris:129184 | Objects:1/58 | Lamps:0/1 | Mem:84.39M</div>
<div class="a" style="left:1274px;top:4px;width:6px;height:20px;background:#252525;border-radius:3px 0 0 3px"></div>
<div class="t" style="left:12.5px;top:32.12px;font-size:11.5px;color:#f2f2f2;">Frame:60 | Time:01:53.94 | Ve:138541 Fa:145629 La:1 | Mem:84.38M (0.00M, Peak 446.90M)</div>
<div class="a" style="left:0px;top:43px;width:1005px;height:6px;background:#c3b8ae;"></div>
<div class="a" style="left:0px;top:50px;width:13px;height:13px;background:#b3aaa1;border-radius:0 4px 4px 0"></div>
<div class="a" style="left:992px;top:50px;width:13px;height:13px;background:#b3aaa1;border-radius:4px 0 0 4px"></div>
<svg class="a" style="left:994px;top:52px" width="10" height="10" viewBox="0 0 10 10"><path d="M5,1.5V8.5M1.5,5H8.5" stroke="#d7cec6" stroke-width="1.5"/></svg>
<svg class="a" style="left:0px;top:52px" width="10" height="10" viewBox="0 0 10 10"><path d="M4,1.5V8.5M0.5,5H7.5" stroke="#d7cec6" stroke-width="1.5"/></svg>
<svg class="a" style="left:991px;top:28px" width="13" height="13" viewBox="0 0 13 13"><line x1="0" y1="0" x2="13" y2="13" stroke="#8a8a8a" stroke-width="1"/><line x1="3" y1="0" x2="13" y2="10" stroke="#8a8a8a" stroke-width="1"/><line x1="6" y1="0" x2="13" y2="7" stroke="#8a8a8a" stroke-width="1"/></svg>
<svg class="a" style="left:0px;top:706px" width="14" height="14" viewBox="0 0 14 14"><line x1="0" y1="4" x2="10" y2="14" stroke="#777" stroke-width="1.2"/><line x1="0" y1="9" x2="5" y2="14" stroke="#777" stroke-width="1.2"/></svg>
<div class="a" style="left:8px;top:697px;width:29px;height:21px;background:#242424;border-radius:4px;"></div>
<svg class="a" style="left:12px;top:701px" width="16" height="14" viewBox="0 0 16 14"><rect x="0.5" y="0.5" width="15" height="13" fill="#f2f2f2"/><rect x="1.5" y="1.5" width="13" height="6" fill="#c9a89a"/><circle cx="10" cy="4" r="1.6" fill="#fff"/><rect x="1.5" y="7.5" width="13" height="2.5" fill="#5a4a55"/><rect x="2" y="11" width="12" height="1.5" fill="#333"/></svg>
<svg class="a" style="left:28px;top:700px" width="7" height="14" viewBox="0 0 7 14"><path d="M3.5,1 L6.5,5.5 L0.5,5.5Z M0.5,8.5 L6.5,8.5 L3.5,13Z" fill="#6a6a6a"/></svg>
<div class="t" style="left:51px;top:701.64px;font-size:12px;color:#e3a23c;">View</div>
<div class="t" style="left:95.3px;top:701.64px;font-size:12px;color:#e3a23c;">Image</div>
<div class="a" style="left:139px;top:697px;width:230px;height:21px;background:#212121;border-radius:4px;"></div>
<div class="a" style="left:170px;top:697px;width:1px;height:21px;background:#2b2b2b;"></div>
<div class="a" style="left:290.5px;top:697px;width:1px;height:21px;background:#2b2b2b;"></div>
<div class="a" style="left:311px;top:697px;width:1px;height:21px;background:#2b2b2b;"></div>
<svg class="a" style="left:144px;top:700px" width="13" height="15" viewBox="0 0 13 15"><path d="M0.5,0.5 H9 L12.5,4 V14.5 H0.5Z" fill="#f2f2f2"/><rect x="1.8" y="4" width="9.5" height="5" fill="#d8b4a6"/><rect x="1.8" y="9" width="9.5" height="4" fill="#6a5a78"/></svg>
<svg class="a" style="left:161px;top:700px" width="7" height="14" viewBox="0 0 7 14"><path d="M3.5,1 L6.5,5.5 L0.5,5.5Z M0.5,8.5 L6.5,8.5 L3.5,13Z" fill="#6a6a6a"/></svg>
<div class="t" style="left:178px;top:701.78px;font-size:11.6px;color:#e3a23c;">Render Result</div>
<div class="t" style="left:297px;top:701.82px;font-size:11.5px;color:#e8e8e8;">F</div>
<svg class="a" style="left:316px;top:703px" width="11" height="11" viewBox="0 0 11 11"><path d="M5.5,0.5V10.5M0.5,5.5H10.5" stroke="#f2f2f2" stroke-width="2"/></svg>
<svg class="a" style="left:333px;top:701px" width="16" height="14" viewBox="0 0 16 14"><rect x="0.5" y="3" width="15" height="10.5" fill="#c8bb8a"/><rect x="3" y="0.5" width="9" height="7" fill="#f2f2f2"/><rect x="0.5" y="7" width="15" height="6.5" fill="#d8cb9a" stroke="#6a6040" stroke-width="0.8"/></svg>
<svg class="a" style="left:355px;top:703px" width="10" height="10" viewBox="0 0 10 10"><path d="M1,1L9,9M9,1L1,9" stroke="#f2f2f2" stroke-width="2"/></svg>
<div class="a" style="left:376px;top:697px;width:64px;height:21px;background:#212121;border-radius:4px;"></div>
<svg class="a" style="left:381px;top:701px" width="13" height="15" viewBox="0 0 13 15"><path d="M0.5,0.5 H9 L12.5,4 V14.5 H0.5Z" fill="#f2f2f2"/><rect x="1.8" y="4" width="9.5" height="5" fill="#d8b4a6"/><rect x="1.8" y="9" width="9.5" height="4" fill="#6a5a78"/></svg>
<div class="t" style="left:399px;top:701.78px;font-size:11.6px;color:#e3a23c;">View</div>
<svg class="a" style="left:432px;top:701px" width="7" height="14" viewBox="0 0 7 14"><path d="M3.5,1 L6.5,5.5 L0.5,5.5Z M0.5,8.5 L6.5,8.5 L3.5,13Z" fill="#5a5a5a"/></svg>
<div class="a" style="left:447px;top:697px;width:240px;height:21px;background:#222;border-radius:4px;"></div>
<div class="a" style="left:510px;top:697px;width:1px;height:21px;background:#2d2d2d;"></div>
<div class="a" style="left:605px;top:697px;width:1px;height:21px;background:#2d2d2d;"></div>
<div class="t" style="left:455px;top:701.78px;font-size:11.6px;color:#e3a23c;">Slot 1</div>
<svg class="a" style="left:502px;top:701px" width="7" height="14" viewBox="0 0 7 14"><path d="M3.5,1 L6.5,5.5 L0.5,5.5Z M0.5,8.5 L6.5,8.5 L3.5,13Z" fill="#5a5a5a"/></svg>
<div class="t" style="left:517.5px;top:701.78px;font-size:11.6px;color:#e3a23c;">RenderLayer</div>
<svg class="a" style="left:597px;top:701px" width="7" height="14" viewBox="0 0 7 14"><path d="M3.5,1 L6.5,5.5 L0.5,5.5Z M0.5,8.5 L6.5,8.5 L3.5,13Z" fill="#5a5a5a"/></svg>
<div class="t" style="left:614px;top:701.78px;font-size:11.6px;color:#e3a23c;">Combined</div>
<svg class="a" style="left:678px;top:701px" width="7" height="14" viewBox="0 0 7 14"><path d="M3.5,1 L6.5,5.5 L0.5,5.5Z M0.5,8.5 L6.5,8.5 L3.5,13Z" fill="#5a5a5a"/></svg>
<div class="a" style="left:691px;top:698px;width:78px;height:20px;background:#222;border-radius:4px;"></div>
<div class="a" style="left:693px;top:699px;width:17px;height:18px;background:#e99a18;border-radius:3px"></div>
<svg class="a" style="left:695px;top:701px" width="14" height="14" viewBox="0 0 14 14"><rect x="0.5" y="0.5" width="13" height="13" fill="#fff" stroke="#222" stroke-width="1"/><path d="M1,13 L13,1" stroke="#222" stroke-width="2"/><rect x="2" y="2" width="3" height="3" fill="#b05050"/><rect x="8" y="8" width="3" height="3" fill="#b05050"/></svg>
<svg class="a" style="left:714px;top:701px" width="14" height="14" viewBox="0 0 14 14"><rect x="0.5" y="0.5" width="13" height="13" fill="#ddd"/><rect x="0.5" y="0.5" width="4.3" height="4.3" fill="#a05050"/><rect x="9.2" y="0.5" width="4.3" height="4.3" fill="#a05050"/><rect x="4.8" y="4.8" width="4.3" height="4.3" fill="#a05050"/><rect x="0.5" y="9.2" width="4.3" height="4.3" fill="#a05050"/><rect x="9.2" y="9.2" width="4.3" height="4.3" fill="#a05050"/></svg>
<svg class="a" style="left:733px;top:701px" width="14" height="14" viewBox="0 0 14 14"><rect x="0.5" y="0.5" width="13" height="13" fill="#222" stroke="#888"/><path d="M0.5,13.5 L13.5,0.5 V13.5Z" fill="#eee"/></svg>
<svg class="a" style="left:752px;top:701px" width="14" height="14" viewBox="0 0 14 14"><rect x="1" y="1" width="8" height="8" fill="#666" stroke="#bbb"/><rect x="5" y="5" width="8" height="8" fill="#444" stroke="#ddd"/></svg>
<div class="a" style="left:1016px;top:32px;width:29px;height:20px;background:#262626;border-radius:4px;"></div>
<svg class="a" style="left:1019px;top:35px" width="18" height="14" viewBox="0 0 18 14"><rect x="0.5" y="0.5" width="16" height="5" rx="2" fill="#dcdcdc"/><rect x="1.5" y="1.5" width="9" height="3" fill="#777"/><rect x="0.5" y="8" width="16" height="5.5" rx="2" fill="#f5f5f5"/><path d="M2.5,10.7 L4.5,9 V12.4Z M14.5,10.7 L12.5,9 V12.4Z" fill="#222"/></svg>
<svg class="a" style="left:1036px;top:35px" width="7" height="14" viewBox="0 0 7 14"><path d="M3.5,1 L6.5,5.5 L0.5,5.5Z M0.5,8.5 L6.5,8.5 L3.5,13Z" fill="#555"/></svg>
<div class="a" style="left:1051px;top:31px;width:224px;height:22px;background:#2a2a2a;border-radius:4px;border-radius:5px"></div>
<svg class="a" style="left:1180px;top:24px" width="90" height="70" viewBox="0 0 90 70"><circle cx="40" cy="32" r="33" fill="#9a9a9a" opacity="0.13"/><circle cx="50" cy="32" r="20" fill="none" stroke="#b8b8b8" stroke-width="7" opacity="0.25"/><circle cx="52" cy="33" r="13" fill="#2a2a2a" opacity="0.35"/></svg>
<div class="a" style="left:1073px;top:32px;width:20px;height:18px;background:#e99a18;"></div>
<svg class="a" style="left:1056px;top:37px" width="15" height="13" viewBox="0 0 15 13"><rect x="0.5" y="3" width="14" height="9.5" rx="1" fill="#7a7a7a"/><rect x="2" y="1" width="4" height="3" fill="#999"/><circle cx="8.5" cy="7.8" r="3.5" fill="#555" stroke="#bbb"/></svg>
<svg class="a" style="left:1075px;top:33px" width="17" height="17" viewBox="0 0 17 17"><rect x="3" y="3" width="12" height="12" fill="#e8dcc0" transform="rotate(12 9 9)"/><rect x="1" y="1" width="11" height="11" fill="#fff" stroke="#222" stroke-width="1"/><path d="M5,10 Q4,7 7,7 V3 H9" stroke="#2a5aa8" stroke-width="1.8" fill="none"/></svg>
<svg class="a" style="left:1095px;top:34px" width="15" height="16" viewBox="0 0 15 16"><circle cx="3" cy="3" r="2.5" fill="#b0c080" opacity="0.6"/><rect x="8" y="2" width="5" height="10" rx="2" fill="#7f9ac0"/><circle cx="6" cy="11" r="4" fill="#aaa"/></svg>
<svg class="a" style="left:1115px;top:35px" width="14" height="14" viewBox="0 0 14 14"><circle cx="7" cy="7" r="6.3" fill="#5a7fa8"/><path d="M3,4 Q6,2 8,5 Q6,8 4,7Z M8,9 Q11,8 12,10 Q10,13 8,12Z" fill="#8aa8c8"/></svg>
<svg class="a" style="left:1136px;top:34px" width="14" height="15" viewBox="0 0 14 15"><path d="M7,0.5 L13.5,3.5 V11 L7,14.5 L0.5,11 V3.5Z" fill="#b88a50"/><path d="M7,0.5 L13.5,3.5 L7,6.5 L0.5,3.5Z" fill="#d8aa70"/><path d="M7,6.5 V14.5" stroke="#8a6030"/></svg>
<svg class="a" style="left:1154px;top:35px" width="16" height="13" viewBox="0 0 16 13"><g fill="none" stroke="#bdbdbd" stroke-width="1.8"><rect x="1" y="5" width="8" height="5" rx="2.5" transform="rotate(-35 5 7.5)"/><rect x="7" y="3" width="8" height="5" rx="2.5" transform="rotate(-35 11 5.5)"/></g></svg>
<svg class="a" style="left:1174px;top:34px" width="15" height="16" viewBox="0 0 15 16"><path d="M2,14 L9,6" stroke="#7f9ac0" stroke-width="2.6"/><circle cx="10.5" cy="4.5" r="3.8" fill="none" stroke="#bbb" stroke-width="2"/></svg>
<svg class="a" style="left:1195px;top:35px" width="12" height="15" viewBox="0 0 12 15"><path d="M3,13 Q12,10 8,3" stroke="#aaa" stroke-width="1.3" fill="none"/><circle cx="7" cy="2" r="1.6" fill="#eee"/><circle cx="3" cy="13" r="1.6" fill="#fff"/></svg>
<svg class="a" style="left:1215px;top:35px" width="13" height="13" viewBox="0 0 13 13"><circle cx="6.5" cy="6.5" r="6" fill="#9a9a9a"/><circle cx="5" cy="5" r="3" fill="#c8c8c8"/></svg>
<svg class="a" style="left:1235px;top:35px" width="13" height="13" viewBox="0 0 13 13"><rect x="0" y="0" width="13" height="13" fill="#e6dcd8"/><g fill="#6a4a4a"><rect x="2" y="0" width="3" height="3"/><rect x="8" y="0" width="3" height="3"/><rect x="0" y="4" width="3" height="3"/><rect x="5" y="4" width="3" height="3"/><rect x="10" y="4" width="3" height="3"/><rect x="2" y="8" width="3" height="3"/><rect x="8" y="8" width="3" height="3"/></g></svg>
<svg class="a" style="left:1253px;top:33px" width="18" height="17" viewBox="0 0 18 17"><path d="M1,7 L6,14 L12,5" stroke="#4a6a9a" stroke-width="3" fill="none"/><circle cx="13" cy="5" r="3.3" fill="#bbb"/></svg>
<svg class="a" style="left:1268px;top:28px" width="12" height="12" viewBox="0 0 12 12"><line x1="0" y1="0" x2="12" y2="12" stroke="#777" stroke-width="1"/><line x1="3" y1="0" x2="12" y2="9" stroke="#777" stroke-width="1"/><line x1="6" y1="0" x2="12" y2="6" stroke="#777" stroke-width="1"/></svg>
<svg class="a" style="left:1019px;top:63px" width="9" height="9" viewBox="0 0 9 9"><path d="M0.5,0.5 L8.5,4.5 L0.5,8.5Z" fill="#b8b8b8"/></svg>
<div class="t" style="left:1031.7px;top:60.61px;font-size:12.1px;color:#e4e4e4;">Freestyle</div>
<svg class="a" style="left:1019px;top:87px" width="9" height="9" viewBox="0 0 9 9"><path d="M0.5,0.5 L8.5,0.5 L4.5,8.5Z" fill="#b8b8b8"/></svg>
<div class="t" style="left:1031.7px;top:84.81px;font-size:12.1px;color:#e4e4e4;">Freestyle Line Set</div>
<svg class="a" style="left:1238px;top:74px" width="16" height="16" viewBox="0 0 16 16"><line x1="0" y1="0" x2="16" y2="16" stroke="#555" stroke-width="1"/><line x1="3" y1="0" x2="16" y2="13" stroke="#555" stroke-width="1"/><line x1="6" y1="0" x2="16" y2="10" stroke="#555" stroke-width="1"/><line x1="9" y1="0" x2="16" y2="7" stroke="#555" stroke-width="1"/></svg>
<div class="a" style="left:1014px;top:111px;width:212px;height:128px;background:#2b2b2b;border-radius:4px;border-radius:5px;box-shadow:0 1px 0 #444"></div>
<div class="a" style="left:1020px;top:120px;width:178px;height:18px;background:#7d4f0f;border-radius:3px"></div>
<div class="t" style="left:1026.6px;top:123.45px;font-size:11.4px;color:#ffffff;letter-spacing:-0.5px">Shroud_Fans_V</div>
<svg class="a" style="left:1183px;top:123px" width="14" height="14" viewBox="0 0 14 14"><rect x="0" y="0" width="14" height="14" rx="3" fill="#e99a18"/><path d="M3,7 L6,10 L11.5,3.5" stroke="#fff" stroke-width="2.2" fill="none"/></svg>
<div class="t" style="left:1026.6px;top:143.45px;font-size:11.4px;color:#e3a23c;letter-spacing:-0.5px">Heatsink_Fins_V</div>
<svg class="a" style="left:1183px;top:143px" width="14" height="14" viewBox="0 0 14 14"><rect x="0" y="0" width="14" height="14" rx="3" fill="#e99a18"/><path d="M3,7 L6,10 L11.5,3.5" stroke="#fff" stroke-width="2.2" fill="none"/></svg>
<div class="t" style="left:1026.6px;top:163.45px;font-size:11.4px;color:#e3a23c;letter-spacing:-0.5px">RAM_V</div>
<svg class="a" style="left:1183px;top:163px" width="14" height="14" viewBox="0 0 14 14"><rect x="0" y="0" width="14" height="14" rx="3" fill="#e99a18"/><path d="M3,7 L6,10 L11.5,3.5" stroke="#fff" stroke-width="2.2" fill="none"/></svg>
<div class="t" style="left:1026.6px;top:183.45px;font-size:11.4px;color:#e3a23c;letter-spacing:-0.5px">GPU_V</div>
<svg class="a" style="left:1183px;top:183px" width="14" height="14" viewBox="0 0 14 14"><rect x="0" y="0" width="14" height="14" rx="3" fill="#e99a18"/><path d="M3,7 L6,10 L11.5,3.5" stroke="#fff" stroke-width="2.2" fill="none"/></svg>
<div class="t" style="left:1026.6px;top:203.45px;font-size:11.4px;color:#e3a23c;letter-spacing:-0.5px">PCB_Components_V</div>
<svg class="a" style="left:1183px;top:203px" width="14" height="14" viewBox="0 0 14 14"><rect x="0" y="0" width="14" height="14" rx="3" fill="#e99a18"/><path d="M3,7 L6,10 L11.5,3.5" stroke="#fff" stroke-width="2.2" fill="none"/></svg>
<div class="a" style="left:1207px;top:119px;width:16px;height:100px;background:#262626;border-radius:4px;border-radius:7px"></div>
<div class="a" style="left:1209px;top:122px;width:12px;height:82px;background:#6c4610;border-radius:4px;border-radius:6px"></div>
<svg class="a" style="left:1023px;top:222px" width="10" height="10" viewBox="0 0 10 10"><circle cx="5" cy="5" r="3.8" fill="none" stroke="#888" stroke-width="1.2"/><path d="M5,3V7M3,5H7" stroke="#888"/></svg>
<div class="a" style="left:1124px;top:225px;width:14px;height:1.5px;background:#aaa;"></div>
<div class="a" style="left:1124px;top:228px;width:14px;height:1.5px;background:#aaa;"></div>
<div class="a" style="left:1235px;top:112px;width:20px;height:58px;background:#2a2a2a;border-radius:4px;"></div>
<svg class="a" style="left:1239px;top:115px" width="12" height="12" viewBox="0 0 12 12"><path d="M6,1V11M1,6H11" stroke="#f0f0f0" stroke-width="2"/></svg>
<div class="a" style="left:1240px;top:140px;width:10px;height:2px;background:#e8e8e8;"></div>
<svg class="a" style="left:1238px;top:154px" width="13" height="13" viewBox="0 0 13 13"><path d="M1,1 H12 L7,12Z" fill="#222"/><path d="M7,12 L12,1" stroke="#ddd" stroke-width="1.5"/></svg>
<div class="a" style="left:1235px;top:184px;width:20px;height:38px;background:#2a2a2a;border-radius:4px;"></div>
<svg class="a" style="left:1239px;top:188px" width="12" height="8" viewBox="0 0 12 8"><path d="M1,7 L6,1.5 L11,7Z" fill="#eee"/></svg>
<svg class="a" style="left:1239px;top:209px" width="12" height="8" viewBox="0 0 12 8"><path d="M1,1 L11,1 L6,6.5Z" fill="#eee"/></svg>
<div class="a" style="left:1264px;top:192px;width:13px;height:520px;background:#633f0a;border-radius:4px;border-radius:6px;box-shadow:inset -2px 0 0 #4a3008"></div>
<div class="t" style="left:1021.7px;top:249.08px;font-size:11.6px;color:#d2d2d2;">Selection By:</div>
<div class="t" style="left:1015px;top:268px;width:46px;height:19px;line-height:19px;background:#e99a18;border-radius:4px 0 0 4px;text-align:center;font-size:11.6px;color:#150f05;overflow:hidden">Visibility</div>
<div class="t" style="left:1061px;top:268px;width:49px;height:19px;line-height:19px;background:#e99a18;border-radius:0;text-align:center;font-size:11.6px;color:#150f05;overflow:hidden">Edge Typ</div>
<div class="a" style="left:1060.5px;top:268px;width:1px;height:19px;background:#1a1a1a;"></div>
<div class="t" style="left:1110px;top:268px;width:48px;height:19px;line-height:19px;background:#292929;border-radius:0;text-align:center;font-size:11.6px;color:#f0f0f0;overflow:hidden">Face Ma</div>
<div class="a" style="left:1109.5px;top:268px;width:1px;height:19px;background:#1a1a1a;"></div>
<div class="t" style="left:1158px;top:268px;width:47px;height:19px;line-height:19px;background:#e99a18;border-radius:0;text-align:center;font-size:11.6px;color:#150f05;overflow:hidden">Group</div>
<div class="a" style="left:1157.5px;top:268px;width:1px;height:19px;background:#1a1a1a;"></div>
<div class="t" style="left:1205px;top:268px;width:49px;height:19px;line-height:19px;background:#e99a18;border-radius:0 4px 4px 0;text-align:center;font-size:11.6px;color:#150f05;overflow:hidden">Image B</div>
<div class="a" style="left:1204.5px;top:268px;width:1px;height:19px;background:#1a1a1a;"></div>
<div class="t" style="left:1021.7px;top:293.18px;font-size:11.6px;color:#d2d2d2;">Visibility:</div>
<div class="t" style="left:1015px;top:311px;width:78px;height:20px;line-height:20px;background:#e99a18;border-radius:4px 0 0 4px;text-align:center;font-size:11.6px;color:#150f05;overflow:hidden">Visible</div>
<div class="t" style="left:1093px;top:311px;width:80px;height:20px;line-height:20px;background:#292929;border-radius:0;text-align:center;font-size:11.6px;color:#f0f0f0;overflow:hidden">Hidden</div>
<div class="a" style="left:1092.5px;top:311px;width:1px;height:20px;background:#1a1a1a;"></div>
<div class="t" style="left:1173px;top:311px;width:81px;height:20px;line-height:20px;background:#292929;border-radius:0 4px 4px 0;text-align:center;font-size:11.6px;color:#f0f0f0;overflow:hidden">QI Range</div>
<div class="a" style="left:1172.5px;top:311px;width:1px;height:20px;background:#1a1a1a;"></div>
<div class="t" style="left:1021.7px;top:336.58px;font-size:11.6px;color:#d2d2d2;">Edge Types:</div>
<div class="t" style="left:1015px;top:355px;width:56px;height:20px;line-height:20px;background:#e99a18;border-radius:4px 0 0 4px;text-align:center;font-size:11.6px;color:#150f05;overflow:hidden">Inclusive</div>
<div class="t" style="left:1071px;top:355px;width:58px;height:20px;line-height:20px;background:#292929;border-radius:0 4px 4px 0;text-align:center;font-size:11.6px;color:#f0f0f0;overflow:hidden">Exclusive</div>
<div class="a" style="left:1070.5px;top:355px;width:1px;height:20px;background:#1a1a1a;"></div>
<div class="t" style="left:1139px;top:355px;width:57px;height:20px;line-height:20px;background:#e99a18;border-radius:4px 0 0 4px;text-align:center;font-size:11.6px;color:#150f05;overflow:hidden">Logical OR</div>
<div class="t" style="left:1196px;top:355px;width:58px;height:20px;line-height:20px;background:#292929;border-radius:0 4px 4px 0;text-align:center;font-size:11.6px;color:#f0f0f0;overflow:hidden">Logical ...</div>
<div class="a" style="left:1195.5px;top:355px;width:1px;height:20px;background:#1a1a1a;"></div>
<svg class="a" style="left:1017px;top:380.5px" width="14" height="14" viewBox="0 0 14 14"><rect x="0" y="0" width="14" height="14" rx="3" fill="#e99a18"/><path d="M3,7 L6,10 L11.5,3.5" stroke="#fff" stroke-width="2.2" fill="none"/></svg>
<div class="t" style="left:1038px;top:380.98px;font-size:11.6px;color:#e3a23c;">Silhouette</div>
<svg class="a" style="left:1110px;top:379px" width="19" height="19" viewBox="0 0 19 19"><rect x="0.5" y="0.5" width="18" height="18" rx="3" fill="#2c2c2c" stroke="#202020"/><path d="M5.5,5.5 L13.5,13.5 M13.5,5.5 L5.5,13.5" stroke="#f4f4f4" stroke-width="2"/></svg>
<svg class="a" style="left:1017px;top:402.5px" width="14" height="14" viewBox="0 0 14 14"><rect x="0" y="0" width="14" height="14" rx="3" fill="#e99a18"/><path d="M3,7 L6,10 L11.5,3.5" stroke="#fff" stroke-width="2.2" fill="none"/></svg>
<div class="t" style="left:1038px;top:402.98px;font-size:11.6px;color:#e3a23c;">Border</div>
<svg class="a" style="left:1110px;top:401px" width="19" height="19" viewBox="0 0 19 19"><rect x="0.5" y="0.5" width="18" height="18" rx="3" fill="#2c2c2c" stroke="#202020"/><path d="M5.5,5.5 L13.5,13.5 M13.5,5.5 L5.5,13.5" stroke="#f4f4f4" stroke-width="2"/></svg>
<svg class="a" style="left:1017px;top:424.5px" width="14" height="14" viewBox="0 0 14 14"><rect x="0" y="0" width="14" height="14" rx="3" fill="#2a2a2a"/></svg>
<div class="t" style="left:1038px;top:424.98px;font-size:11.6px;color:#e3a23c;">Contour</div>
<svg class="a" style="left:1110px;top:423px" width="19" height="19" viewBox="0 0 19 19"><rect x="0.5" y="0.5" width="18" height="18" rx="3" fill="#2c2c2c" stroke="#202020"/><path d="M5.5,5.5 L13.5,13.5 M13.5,5.5 L5.5,13.5" stroke="#9a9a9a" stroke-width="2"/></svg>
<svg class="a" style="left:1017px;top:446.5px" width="14" height="14" viewBox="0 0 14 14"><rect x="0" y="0" width="14" height="14" rx="3" fill="#2a2a2a"/></svg>
<div class="t" style="left:1038px;top:446.98px;font-size:11.6px;color:#e3a23c;">Suggestive ...</div>
<svg class="a" style="left:1110px;top:445px" width="19" height="19" viewBox="0 0 19 19"><rect x="0.5" y="0.5" width="18" height="18" rx="3" fill="#2c2c2c" stroke="#202020"/><path d="M5.5,5.5 L13.5,13.5 M13.5,5.5 L5.5,13.5" stroke="#9a9a9a" stroke-width="2"/></svg>
<svg class="a" style="left:1017px;top:468.5px" width="14" height="14" viewBox="0 0 14 14"><rect x="0" y="0" width="14" height="14" rx="3" fill="#2a2a2a"/></svg>
<div class="t" style="left:1038px;top:468.98px;font-size:11.6px;color:#e3a23c;">Ridge &amp; Va...</div>
<svg class="a" style="left:1110px;top:467px" width="19" height="19" viewBox="0 0 19 19"><rect x="0.5" y="0.5" width="18" height="18" rx="3" fill="#2c2c2c" stroke="#202020"/><path d="M5.5,5.5 L13.5,13.5 M13.5,5.5 L5.5,13.5" stroke="#9a9a9a" stroke-width="2"/></svg>
<svg class="a" style="left:1141.5px;top:380.5px" width="14" height="14" viewBox="0 0 14 14"><rect x="0" y="0" width="14" height="14" rx="3" fill="#e99a18"/><path d="M3,7 L6,10 L11.5,3.5" stroke="#fff" stroke-width="2.2" fill="none"/></svg>
<div class="t" style="left:1163px;top:380.98px;font-size:11.6px;color:#e3a23c;">Crease</div>
<svg class="a" style="left:1235px;top:379px" width="19" height="19" viewBox="0 0 19 19"><rect x="0.5" y="0.5" width="18" height="18" rx="3" fill="#2c2c2c" stroke="#202020"/><path d="M5.5,5.5 L13.5,13.5 M13.5,5.5 L5.5,13.5" stroke="#f4f4f4" stroke-width="2"/></svg>
<svg class="a" style="left:1141.5px;top:402.5px" width="14" height="14" viewBox="0 0 14 14"><rect x="0" y="0" width="14" height="14" rx="3" fill="#e99a18"/><path d="M3,7 L6,10 L11.5,3.5" stroke="#fff" stroke-width="2.2" fill="none"/></svg>
<div class="t" style="left:1163px;top:402.98px;font-size:11.6px;color:#e3a23c;">Edge Mark</div>
<svg class="a" style="left:1235px;top:401px" width="19" height="19" viewBox="0 0 19 19"><rect x="0.5" y="0.5" width="18" height="18" rx="3" fill="#2c2c2c" stroke="#202020"/><path d="M5.5,5.5 L13.5,13.5 M13.5,5.5 L5.5,13.5" stroke="#f4f4f4" stroke-width="2"/></svg>
<svg class="a" style="left:1141.5px;top:424.5px" width="14" height="14" viewBox="0 0 14 14"><rect x="0" y="0" width="14" height="14" rx="3" fill="#2a2a2a"/></svg>
<div class="t" style="left:1163px;top:424.98px;font-size:11.6px;color:#e3a23c;">External Co...</div>
<svg class="a" style="left:1235px;top:423px" width="19" height="19" viewBox="0 0 19 19"><rect x="0.5" y="0.5" width="18" height="18" rx="3" fill="#2c2c2c" stroke="#202020"/><path d="M5.5,5.5 L13.5,13.5 M13.5,5.5 L5.5,13.5" stroke="#9a9a9a" stroke-width="2"/></svg>
<svg class="a" style="left:1141.5px;top:446.5px" width="14" height="14" viewBox="0 0 14 14"><rect x="0" y="0" width="14" height="14" rx="3" fill="#2a2a2a"/></svg>
<div class="t" style="left:1163px;top:446.98px;font-size:11.6px;color:#e3a23c;">Material Bo...</div>
<svg class="a" style="left:1235px;top:445px" width="19" height="19" viewBox="0 0 19 19"><rect x="0.5" y="0.5" width="18" height="18" rx="3" fill="#2c2c2c" stroke="#202020"/><path d="M5.5,5.5 L13.5,13.5 M13.5,5.5 L5.5,13.5" stroke="#9a9a9a" stroke-width="2"/></svg>
<div class="t" style="left:1021px;top:490.68px;font-size:11.6px;color:#d2d2d2;">Group:</div>
<div class="a" style="left:1014px;top:509px;width:76px;height:20px;background:#2a2a2a;border-radius:4px;"></div>
<svg class="a" style="left:1018px;top:512px" width="15" height="14" viewBox="0 0 15 14"><circle cx="4.5" cy="9" r="3.8" fill="#eee"/><path d="M6,2 L11,2 L14,4 V10 L9,10 L6,8Z" fill="#ddd" stroke="#888" stroke-width="0.6"/></svg>
<div class="t" style="left:1036.7px;top:512.98px;font-size:11.6px;color:#e3a23c;">Shroud</div>
<svg class="a" style="left:1076px;top:514px" width="11" height="11" viewBox="0 0 11 11"><path d="M1.5,1.5 L9.5,9.5 M9.5,1.5 L1.5,9.5" stroke="#f4f4f4" stroke-width="2"/></svg>
<div class="t" style="left:1100px;top:509px;width:77px;height:20px;line-height:20px;background:#e99a18;border-radius:4px 0 0 4px;text-align:center;font-size:11.6px;color:#150f05;overflow:hidden">Inclusive</div>
<div class="t" style="left:1177px;top:509px;width:77px;height:20px;line-height:20px;background:#292929;border-radius:0 4px 4px 0;text-align:center;font-size:11.6px;color:#f0f0f0;overflow:hidden">Exclusive</div>
<div class="a" style="left:1176.5px;top:509px;width:1px;height:20px;background:#1a1a1a;"></div>
<svg class="a" style="left:1019px;top:545.5px" width="9" height="9" viewBox="0 0 9 9"><path d="M0.5,0.5 L8.5,0.5 L4.5,8.5Z" fill="#b8b8b8"/></svg>
<div class="t" style="left:1031.7px;top:542.81px;font-size:12.1px;color:#e4e4e4;">Freestyle Line Style</div>
<svg class="a" style="left:1236px;top:538px" width="16" height="16" viewBox="0 0 16 16"><line x1="0" y1="0" x2="16" y2="16" stroke="#555" stroke-width="1"/><line x1="3" y1="0" x2="16" y2="13" stroke="#555" stroke-width="1"/><line x1="6" y1="0" x2="16" y2="10" stroke="#555" stroke-width="1"/><line x1="9" y1="0" x2="16" y2="7" stroke="#555" stroke-width="1"/></svg>
<div class="a" style="left:1014px;top:570px;width:240px;height:19px;background:#262626;border-radius:4px;"></div>
<div class="a" style="left:1045px;top:570px;width:1px;height:19px;background:#303030;"></div>
<div class="a" style="left:1195px;top:570px;width:1px;height:19px;background:#303030;"></div>
<div class="a" style="left:1215px;top:570px;width:1px;height:19px;background:#303030;"></div>
<div class="a" style="left:1235px;top:570px;width:1px;height:19px;background:#303030;"></div>
<svg class="a" style="left:1018px;top:572px" width="17" height="15" viewBox="0 0 17 15"><path d="M1,14 L3,10 L12,2 L15,4 L6,12Z" fill="#9ab0c8" stroke="#333" stroke-width="0.6"/><path d="M1,14 L3,10 L5,12Z" fill="#333"/></svg>
<svg class="a" style="left:1036px;top:573px" width="7" height="14" viewBox="0 0 7 14"><path d="M3.5,1 L6.5,5.5 L0.5,5.5Z M0.5,8.5 L6.5,8.5 L3.5,13Z" fill="#555"/></svg>
<div class="t" style="left:1052.7px;top:572.28px;font-size:11.6px;color:#e3a23c;">DarkBlue</div>
<div class="t" style="left:1201px;top:572.28px;font-size:11.6px;color:#e8e8e8;">F</div>
<svg class="a" style="left:1221px;top:574px" width="11" height="11" viewBox="0 0 11 11"><path d="M5.5,0.5V10.5M0.5,5.5H10.5" stroke="#f2f2f2" stroke-width="2"/></svg>
<svg class="a" style="left:1240px;top:575px" width="10" height="10" viewBox="0 0 10 10"><path d="M1,1L9,9M9,1L1,9" stroke="#9a9a9a" stroke-width="1.8"/></svg>
<div class="t" style="left:1014px;top:595px;width:48px;height:18px;line-height:18px;background:#292929;border-radius:4px 0 0 4px;text-align:center;font-size:11.4px;color:#f0f0f0;overflow:hidden">Strokes</div>
<div class="t" style="left:1062px;top:595px;width:47px;height:18px;line-height:18px;background:#e99a18;border-radius:0;text-align:center;font-size:11.4px;color:#150f05;overflow:hidden">Color</div>
<div class="a" style="left:1061.5px;top:595px;width:1px;height:18px;background:#1a1a1a;"></div>
<div class="t" style="left:1109px;top:595px;width:46px;height:18px;line-height:18px;background:#292929;border-radius:0;text-align:center;font-size:11.4px;color:#f0f0f0;overflow:hidden">Alpha</div>
<div class="a" style="left:1108.5px;top:595px;width:1px;height:18px;background:#1a1a1a;"></div>
<div class="t" style="left:1155px;top:595px;width:50px;height:18px;line-height:18px;background:#292929;border-radius:0;text-align:center;font-size:11.4px;color:#f0f0f0;overflow:hidden">Thicknes</div>
<div class="a" style="left:1154.5px;top:595px;width:1px;height:18px;background:#1a1a1a;"></div>
<div class="t" style="left:1205px;top:595px;width:49px;height:18px;line-height:18px;background:#292929;border-radius:0 4px 4px 0;text-align:center;font-size:11.4px;color:#f0f0f0;overflow:hidden">Geometr</div>
<div class="a" style="left:1204.5px;top:595px;width:1px;height:18px;background:#1a1a1a;"></div>
<div class="t" style="left:1021px;top:622.98px;font-size:11.6px;color:#d2d2d2;">Base Color:</div>
<div class="a" style="left:1138px;top:620px;width:116px;height:18px;background:#2f6ecb;border-radius:4px;border-radius:4px;box-shadow:inset 0 0 0 1px #24508f"></div>
<div class="t" style="left:1021px;top:644.68px;font-size:11.6px;color:#d2d2d2;">Modifiers:</div>
<div class="a" style="left:1014px;top:663px;width:240px;height:20px;background:#262626;border-radius:4px;border-radius:4px;box-shadow:0 1px 0 #444"></div>
<div class="t" style="left:1021px;top:666.28px;font-size:11.6px;color:#e3a23c;">Add Modifier</div>
<svg class="a" style="left:1245px;top:666px" width="7" height="14" viewBox="0 0 7 14"><path d="M3.5,1 L6.5,5.5 L0.5,5.5Z M0.5,8.5 L6.5,8.5 L3.5,13Z" fill="#5a5a5a"/></svg>
<svg class="a" style="left:1007px;top:703px" width="14" height="17" viewBox="0 0 14 17"><line x1="0" y1="7" x2="10" y2="17" stroke="#666" stroke-width="1.2"/><line x1="0" y1="12" x2="5" y2="17" stroke="#666" stroke-width="1.2"/></svg>
</body></html>
